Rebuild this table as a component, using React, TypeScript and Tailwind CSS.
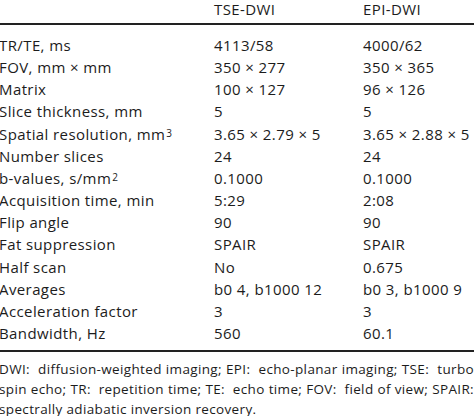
const rows: [string, string, string][] = [
  ['TR/TE, ms', '4113/58', '4000/62'],
  ['FOV, mm × mm', '350 × 277', '350 × 365'],
  ['Matrix', '100 × 127', '96 × 126'],
  ['Slice thickness, mm', '5', '5'],
  ['Spatial resolution, mm³', '3.65 × 2.79 × 5', '3.65 × 2.88 × 5'],
  ['Number slices', '24', '24'],
  ['b-values, s/mm²', '0.1000', '0.1000'],
  ['Acquisition time, min', '5:29', '2:08'],
  ['Flip angle', '90', '90'],
  ['Fat suppression', 'SPAIR', 'SPAIR'],
  ['Half scan', 'No', '0.675'],
  ['Averages', 'b0 4, b1000 12', 'b0 3, b1000 9'],
  ['Acceleration factor', '3', '3'],
  ['Bandwidth, Hz', '560', '60.1'],
];

function Label({ text }: { text: string }) {
  const last = text.slice(-1);
  if (last === '³' || last === '²') {
    return (
      <span>
        {text.slice(0, -1)}
        <sup className="relative -top-[3px] ml-[1px] text-[10px]">{last === '³' ? '3' : '2'}</sup>
      </span>
    );
  }
  return <span>{text}</span>;
}

export default function App() {
  return (
    <div
      className="w-[474px] h-[416px] overflow-hidden bg-white text-[#1c1c1c]"
      style={{ fontFamily: '"Open Sans", sans-serif' }}
    >
      <div className="-ml-[1px] w-[520px]">
        <div className="grid grid-cols-[215px_149px_1fr] text-[15px] tracking-[0.4px] leading-[18px] pb-[5px]">
          <span />
          <span>TSE-DWI</span>
          <span>EPI-DWI</span>
        </div>
        <div className="h-[2px] bg-[#222] w-[476px]" />
        <div className="pt-[9px] pb-[6px]">
          {rows.map(([a, b, c]) => (
            <div
              key={a}
              className="grid grid-cols-[215px_149px_1fr] text-[15px] tracking-[0.4px] leading-[22.15px] whitespace-nowrap"
            >
              <Label text={a} />
              <span>{b}</span>
              <span>{c}</span>
            </div>
          ))}
        </div>
        <div className="h-[2px] bg-[#222] w-[476px]" />
        <div className="w-[475px] pt-[7px] text-[13.5px] tracking-[0.35px] leading-[20px] whitespace-nowrap">
          <p className="text-justify [text-align-last:justify]">
            DWI:&nbsp; diffusion-weighted imaging; EPI:&nbsp; echo-planar imaging; TSE:&nbsp; turbo
          </p>
          <p className="text-justify [text-align-last:justify]">
            spin echo; TR:&nbsp; repetition time; TE:&nbsp; echo time; FOV:&nbsp; field of view; SPAIR:
          </p>
          <p>spectrally adiabatic inversion recovery.</p>
        </div>
      </div>
    </div>
  );
}
